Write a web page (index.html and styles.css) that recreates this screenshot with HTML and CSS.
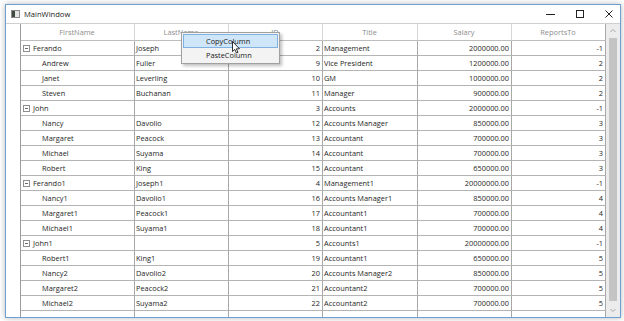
FILE: index.html
```
<!DOCTYPE html>
<html lang="en">
<head>
    <meta charset="UTF-8">
    <title>MainWindow</title>
    <link rel="stylesheet" href="styles.css">
</head>
<body>
    <div class="window">
        <div class="titlebar">
            <div class="appIcon"><span></span></div>
            <div class="caption">MainWindow</div>
            <div class="buttons">
                <svg class="btn" width="29" height="18" viewBox="0 0 29 18"><line x1="13" y1="9.5" x2="22" y2="9.5" stroke="#222" stroke-width="1"/></svg>
                <svg class="btn" width="29" height="18" viewBox="0 0 29 18"><rect x="14.5" y="5.5" width="7" height="7" fill="none" stroke="#222" stroke-width="1"/></svg>
                <svg class="btn" width="29" height="18" viewBox="0 0 29 18"><path d="M14.5 5.5 L21.5 12.5 M21.5 5.5 L14.5 12.5" stroke="#222" stroke-width="1"/></svg>
            </div>
        </div>
        <div class="content">
            <div class="grid">
                <div class="row head">
                    <div class="g"></div>
                    <div class="c">FirstName</div>
                    <div class="c">LastName</div>
                    <div class="c">ID</div>
                    <div class="c">Title</div>
                    <div class="c">Salary</div>
                    <div class="c">ReportsTo</div>
                </div>
                <div class="row group">
                    <div class="g"></div>
                    <div class="c name"><span class="exp"></span>Ferando</div>
                    <div class="c">Joseph</div>
                    <div class="c num">2</div>
                    <div class="c">Management</div>
                    <div class="c num">2000000.00</div>
                    <div class="c num">-1</div>
                </div>
                <div class="row">
                    <div class="g"></div>
                    <div class="c name">Andrew</div>
                    <div class="c">Fuller</div>
                    <div class="c num">9</div>
                    <div class="c">Vice President</div>
                    <div class="c num">1200000.00</div>
                    <div class="c num">2</div>
                </div>
                <div class="row">
                    <div class="g"></div>
                    <div class="c name">Janet</div>
                    <div class="c">Leverling</div>
                    <div class="c num">10</div>
                    <div class="c">GM</div>
                    <div class="c num">1000000.00</div>
                    <div class="c num">2</div>
                </div>
                <div class="row">
                    <div class="g"></div>
                    <div class="c name">Steven</div>
                    <div class="c">Buchanan</div>
                    <div class="c num">11</div>
                    <div class="c">Manager</div>
                    <div class="c num">900000.00</div>
                    <div class="c num">2</div>
                </div>
                <div class="row group">
                    <div class="g"></div>
                    <div class="c name"><span class="exp"></span>John</div>
                    <div class="c"></div>
                    <div class="c num">3</div>
                    <div class="c">Accounts</div>
                    <div class="c num">2000000.00</div>
                    <div class="c num">-1</div>
                </div>
                <div class="row">
                    <div class="g"></div>
                    <div class="c name">Nancy</div>
                    <div class="c">Davolio</div>
                    <div class="c num">12</div>
                    <div class="c">Accounts Manager</div>
                    <div class="c num">850000.00</div>
                    <div class="c num">3</div>
                </div>
                <div class="row">
                    <div class="g"></div>
                    <div class="c name">Margaret</div>
                    <div class="c">Peacock</div>
                    <div class="c num">13</div>
                    <div class="c">Accountant</div>
                    <div class="c num">700000.00</div>
                    <div class="c num">3</div>
                </div>
                <div class="row">
                    <div class="g"></div>
                    <div class="c name">Michael</div>
                    <div class="c">Suyama</div>
                    <div class="c num">14</div>
                    <div class="c">Accountant</div>
                    <div class="c num">700000.00</div>
                    <div class="c num">3</div>
                </div>
                <div class="row">
                    <div class="g"></div>
                    <div class="c name">Robert</div>
                    <div class="c">King</div>
                    <div class="c num">15</div>
                    <div class="c">Accountant</div>
                    <div class="c num">650000.00</div>
                    <div class="c num">3</div>
                </div>
                <div class="row group">
                    <div class="g"></div>
                    <div class="c name"><span class="exp"></span>Ferando1</div>
                    <div class="c">Joseph1</div>
                    <div class="c num">4</div>
                    <div class="c">Management1</div>
                    <div class="c num">20000000.00</div>
                    <div class="c num">-1</div>
                </div>
                <div class="row">
                    <div class="g"></div>
                    <div class="c name">Nancy1</div>
                    <div class="c">Davolio1</div>
                    <div class="c num">16</div>
                    <div class="c">Accounts Manager1</div>
                    <div class="c num">850000.00</div>
                    <div class="c num">4</div>
                </div>
                <div class="row">
                    <div class="g"></div>
                    <div class="c name">Margaret1</div>
                    <div class="c">Peacock1</div>
                    <div class="c num">17</div>
                    <div class="c">Accountant1</div>
                    <div class="c num">700000.00</div>
                    <div class="c num">4</div>
                </div>
                <div class="row">
                    <div class="g"></div>
                    <div class="c name">Michael1</div>
                    <div class="c">Suyama1</div>
                    <div class="c num">18</div>
                    <div class="c">Accountant1</div>
                    <div class="c num">700000.00</div>
                    <div class="c num">4</div>
                </div>
                <div class="row group">
                    <div class="g"></div>
                    <div class="c name"><span class="exp"></span>John1</div>
                    <div class="c"></div>
                    <div class="c num">5</div>
                    <div class="c">Accounts1</div>
                    <div class="c num">20000000.00</div>
                    <div class="c num">-1</div>
                </div>
                <div class="row">
                    <div class="g"></div>
                    <div class="c name">Robert1</div>
                    <div class="c">King1</div>
                    <div class="c num">19</div>
                    <div class="c">Accountant1</div>
                    <div class="c num">650000.00</div>
                    <div class="c num">5</div>
                </div>
                <div class="row">
                    <div class="g"></div>
                    <div class="c name">Nancy2</div>
                    <div class="c">Davolio2</div>
                    <div class="c num">20</div>
                    <div class="c">Accounts Manager2</div>
                    <div class="c num">850000.00</div>
                    <div class="c num">5</div>
                </div>
                <div class="row">
                    <div class="g"></div>
                    <div class="c name">Margaret2</div>
                    <div class="c">Peacock2</div>
                    <div class="c num">21</div>
                    <div class="c">Accountant2</div>
                    <div class="c num">700000.00</div>
                    <div class="c num">5</div>
                </div>
                <div class="row">
                    <div class="g"></div>
                    <div class="c name">Michael2</div>
                    <div class="c">Suyama2</div>
                    <div class="c num">22</div>
                    <div class="c">Accountant2</div>
                    <div class="c num">700000.00</div>
                    <div class="c num">5</div>
                </div>
                <div class="row">
                    <div class="g"></div>
                    <div class="c name"></div>
                    <div class="c"></div>
                    <div class="c num"></div>
                    <div class="c"></div>
                    <div class="c num"></div>
                    <div class="c num"></div>
                </div>
            </div>
            <div class="scrollbar">
                <div class="arrow">
                    <svg width="14" height="14" viewBox="0 0 14 14"><path d="M4.5 8 L7 5.5 L9.5 8" fill="none" stroke="#a6a6a6" stroke-width="1"/></svg>
                </div>
                <div class="thumb"></div>
                <div class="arrow">
                    <svg width="14" height="14" viewBox="0 0 14 14"><path d="M4.5 6 L7 8.5 L9.5 6" fill="none" stroke="#a6a6a6" stroke-width="1"/></svg>
                </div>
            </div>
        </div>
    </div>

    <div class="menu">
        <div class="item active">CopyColumn</div>
        <div class="item">PasteColumn</div>
    </div>
    <svg class="cursor" width="9" height="13" viewBox="0 0 9 13">
        <path d="M0.5 0.5 L0.5 10.5 L2.8 8.4 L4.5 12 L6 11.3 L4.4 7.8 L7.5 7.8 Z" fill="#fff" stroke="#000" stroke-width="0.8"/>
    </svg>
</body>
</html>
```
FILE: styles.css
```
:root{
    --line: #b4b4b4;
    --text: #262626;
}
html, body{
    margin: 0;
    height: 100%;
    background: #ffffff;
}
body{
    position: relative;
    font-family: "Open Sans", "Noto Sans", sans-serif;
    font-size: 7.4px;
    color: var(--text);
    padding-top: 4px;
    padding-left: 5px;
    box-sizing: border-box;
}
.window{
    width: 616px;
    height: 314px;
    border: 1px solid #6f9fd0;
    box-sizing: border-box;
    background: #ffffff;
    display: flex;
    flex-direction: column;
    box-shadow: 0 0 6px rgba(0, 0, 0, 0.28);
}
.titlebar{
    height: 18px;
    display: flex;
    align-items: center;
    flex-shrink: 0;
}
.appIcon{
    width: 7px;
    height: 6px;
    margin-left: 5px;
    margin-right: 4px;
    border: 1px solid #8a8a8a;
    background: #e4e4e4;
    display: flex;
}
.appIcon span{
    width: 3px;
    height: 6px;
    background: #3e4a3e;
}
.caption{
    flex: 1;
    font-size: 7.6px;
    color: #1a1a1a;
}
.buttons{
    display: flex;
}
.btn{
    display: block;
}
.content{
    flex: 1;
    display: flex;
    overflow: hidden;
    border-top: 1px solid #cfcfcf;
}
.grid{
    width: 600px;
    overflow: hidden;
}
.row{
    display: grid;
    grid-template-columns: 15px 114px 94px 94px 95px 94px 94px;
    height: 15px;
}
.g{
    border-right: 1px solid #9d9d9d;
}
.c{
    box-sizing: border-box;
    border-right: 1px solid #a8a8a8;
    border-bottom: 1px solid var(--line);
    line-height: 14px;
    padding: 0 2px 0 1px;
    white-space: nowrap;
    overflow: hidden;
}
.head{
    height: 17px;
}
.head .c{
    line-height: 16px;
    text-align: center;
    color: #8c8c8c;
    border-right-color: #d6d6d6;
    border-bottom-color: #bdbdbd;
}
.head .c:last-child{
    border-right-color: #a8a8a8;
}
.name{
    padding-left: 21px;
}
.group .name{
    padding-left: 2px;
    display: flex;
    align-items: center;
}
.exp{
    width: 5px;
    height: 5px;
    border: 1px solid #8f8f8f;
    margin-right: 3px;
    position: relative;
}
.exp::after{
    content: "";
    position: absolute;
    left: 1px;
    right: 1px;
    top: 2px;
    height: 1px;
    background: #6a6a6a;
}
.num{
    text-align: right;
}
.scrollbar{
    width: 14px;
    background: #ececec;
    display: flex;
    flex-direction: column;
}
.arrow{
    height: 14px;
}
.arrow svg{
    display: block;
}
.thumb{
    flex: 1;
    margin: 0 3px 2px;
    background: #c4c4c4;
}
.menu{
    position: absolute;
    left: 181px;
    top: 32px;
    width: 99px;
    box-sizing: border-box;
    padding: 1px;
    background: #f3f3f3;
    border: 1px solid #a0a0a0;
    box-shadow: 2px 2px 3px rgba(0, 0, 0, 0.25);
}
.item{
    height: 14px;
    line-height: 12px;
    padding-left: 22px;
    border: 1px solid transparent;
    box-sizing: border-box;
    font-size: 7.4px;
    color: #1a1a1a;
}
.item.active{
    background: #cfe5f8;
    border-color: #7fb2e3;
}
.cursor{
    position: absolute;
    left: 232px;
    top: 41px;
}
```
